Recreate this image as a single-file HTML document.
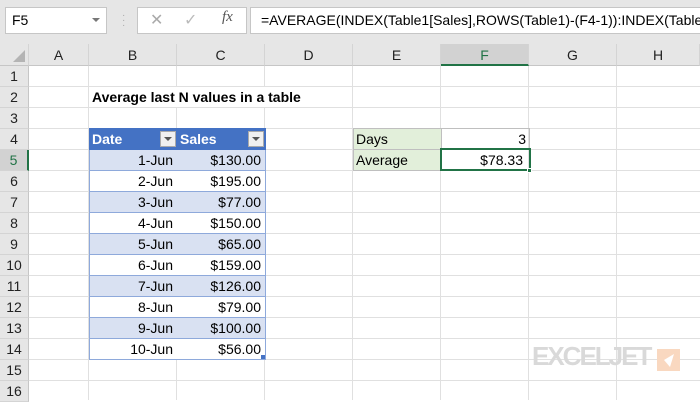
<!DOCTYPE html><html><head><style>
body{margin:0;width:700px;height:400px;overflow:hidden;background:#fff;font-family:"Liberation Sans",Calibri,sans-serif;position:relative}
div{position:absolute;box-sizing:border-box}
.t{font-size:14px;line-height:21px;white-space:nowrap}
.ch{top:44px;height:22px;border-right:1px solid #d4d4d4;text-align:center;font-size:14px;line-height:22px;color:#222;background:#e6e6e6;border-bottom:1px solid #c6c6c6}
.rh{left:0;width:29px;height:21px;border-bottom:1px solid #d4d4d4;text-align:center;font-size:14px;line-height:21px;color:#222;background:#e6e6e6;border-right:1px solid #c6c6c6}
.vl{top:66px;height:334px;width:1px;background:#e0e0e0}
.hl{left:29px;width:671px;height:1px;background:#e0e0e0}
.r{left:89px;width:177px;height:21px;border-bottom:1px solid #8ea9db}
.b{background:#d9e1f2}.w{background:#fff}
</style></head><body>
<div style="left:0;top:0;width:700px;height:44px;background:#e6e6e6"></div>
<div style="left:5px;top:7px;width:102px;height:27px;background:#fff;border:1px solid #c6c6c6"></div>
<div class="t" style="left:12px;top:10px">F5</div>
<div style="left:92px;top:18px;border-left:4px solid transparent;border-right:4px solid transparent;border-top:4px solid #777"></div>
<div style="left:122px;top:13px;color:#aaa;font-size:10px;line-height:5px">·<br>·<br>·</div>
<div style="left:137px;top:7px;width:110px;height:27px;background:#fff;border:1px solid #c6c6c6"></div>
<div style="left:150px;top:10px;color:#aaa;font-size:16px">✕</div>
<div style="left:184px;top:10px;color:#bbb;font-size:16px">✓</div>
<div style="left:222px;top:9px;color:#555;font-size:15px;font-style:italic;font-family:'Liberation Serif',serif">fx</div>
<div style="left:250px;top:7px;width:450px;height:27px;background:#fff;border:1px solid #c6c6c6;border-right:none;overflow:hidden">
<div class="t" style="left:10px;top:2px;font-size:14px">=AVERAGE(INDEX(Table1[Sales],ROWS(Table1)-(F4-1)):INDEX(Table1[Sa</div></div>
<div class="ch" style="left:0;width:29px"></div>
<div style="left:13px;top:50px;border-left:12px solid transparent;border-bottom:12px solid #b4b4b4;width:0"></div>
<div class="ch" style="left:29px;width:60px">A</div>
<div class="ch" style="left:89px;width:88px">B</div>
<div class="ch" style="left:177px;width:88px">C</div>
<div class="ch" style="left:265px;width:88px">D</div>
<div class="ch" style="left:353px;width:88px">E</div>
<div class="ch" style="left:441px;width:88px;background:#d2d2d2;color:#217346;border-bottom:2px solid #217346">F</div>
<div class="ch" style="left:529px;width:88px">G</div>
<div class="ch" style="left:617px;width:83px">H</div>
<div class="vl" style="left:88px"></div><div class="vl" style="left:176px"></div><div class="vl" style="left:264px"></div><div class="vl" style="left:352px"></div><div class="vl" style="left:440px"></div><div class="vl" style="left:528px"></div><div class="vl" style="left:616px"></div>
<div class="hl" style="top:86px"></div><div class="hl" style="top:107px"></div><div class="hl" style="top:128px"></div><div class="hl" style="top:149px"></div><div class="hl" style="top:170px"></div><div class="hl" style="top:191px"></div><div class="hl" style="top:212px"></div><div class="hl" style="top:233px"></div><div class="hl" style="top:254px"></div><div class="hl" style="top:275px"></div><div class="hl" style="top:296px"></div><div class="hl" style="top:317px"></div><div class="hl" style="top:338px"></div><div class="hl" style="top:359px"></div><div class="hl" style="top:380px"></div>
<div class="rh" style="top:66px">1</div><div class="rh" style="top:87px">2</div><div class="rh" style="top:108px">3</div><div class="rh" style="top:129px">4</div><div class="rh" style="top:150px;background:#d2d2d2;color:#217346;border-right:2px solid #217346">5</div><div class="rh" style="top:171px">6</div><div class="rh" style="top:192px">7</div><div class="rh" style="top:213px">8</div><div class="rh" style="top:234px">9</div><div class="rh" style="top:255px">10</div><div class="rh" style="top:276px">11</div><div class="rh" style="top:297px">12</div><div class="rh" style="top:318px">13</div><div class="rh" style="top:339px">14</div><div class="rh" style="top:360px">15</div><div class="rh" style="top:381px">16</div>
<div class="t" style="left:89px;top:87px;width:222px;height:20px;background:#fff;padding-left:3px;font-weight:bold;font-size:14px">Average last N values in a table</div>
<div style="left:89px;top:128px;width:177px;height:22px;background:#4472c4"></div>
<div class="t" style="left:92px;top:129px;color:#fff;font-weight:bold">Date</div>
<div class="t" style="left:180px;top:129px;color:#fff;font-weight:bold">Sales</div>
<div style="left:160px;top:131px;width:16px;height:16px;background:#f0f0f0;border:1px solid #aaa"></div>
<div style="left:164px;top:137px;border-left:4px solid transparent;border-right:4px solid transparent;border-top:4px solid #555"></div>
<div style="left:248px;top:131px;width:16px;height:16px;background:#f0f0f0;border:1px solid #aaa"></div>
<div style="left:252px;top:137px;border-left:4px solid transparent;border-right:4px solid transparent;border-top:4px solid #555"></div>
<div class="r b" style="top:150px"></div><div class="r w" style="top:171px"></div><div class="r b" style="top:192px"></div><div class="r w" style="top:213px"></div><div class="r b" style="top:234px"></div><div class="r w" style="top:255px"></div><div class="r b" style="top:276px"></div><div class="r w" style="top:297px"></div><div class="r b" style="top:318px"></div><div class="r w" style="top:339px"></div>
<div style="left:89px;top:150px;width:177px;height:210px;border:1px solid #8ea9db;border-top:none"></div>
<div style="left:261px;top:355px;width:4px;height:4px;background:#4472c4"></div>
<div class="t" style="left:89px;top:150px;width:84px;text-align:right;line-height:21px">1-Jun<br>2-Jun<br>3-Jun<br>4-Jun<br>5-Jun<br>6-Jun<br>7-Jun<br>8-Jun<br>9-Jun<br>10-Jun</div>
<div class="t" style="left:177px;top:150px;width:84px;text-align:right;line-height:21px">$130.00<br>$195.00<br>$77.00<br>$150.00<br>$65.00<br>$159.00<br>$126.00<br>$79.00<br>$100.00<br>$56.00</div>
<div style="left:353px;top:128px;width:89px;height:43px;background:#e2efda;border:1px solid #bfbfbf"></div>
<div style="left:353px;top:149px;width:89px;height:1px;background:#bfbfbf"></div>
<div style="left:441px;top:128px;width:89px;height:22px;border:1px solid #bfbfbf;border-left:none"></div>
<div class="t" style="left:356px;top:129px">Days</div>
<div class="t" style="left:356px;top:150px">Average</div>
<div class="t" style="left:441px;top:129px;width:85px;text-align:right">3</div>
<div style="left:440px;top:148px;width:91px;height:23px;border:2px solid #217346"></div>
<div style="left:527px;top:168px;width:5px;height:5px;background:#217346;border:1px solid #fff"></div>
<div class="t" style="left:441px;top:150px;width:82px;text-align:right">$78.33</div>
<div style="left:532px;top:341px;font-size:26px;font-weight:bold;color:#d9d9d9;letter-spacing:-2px;line-height:30px">EXCELJET</div>
<div style="left:657px;top:349px;width:23px;height:22px;background:#f9d8c0"></div>
<svg style="position:absolute;left:657px;top:349px" width="23" height="22"><polygon points="7,11 17,5 13,18" fill="#fff"/></svg>
</body></html>
